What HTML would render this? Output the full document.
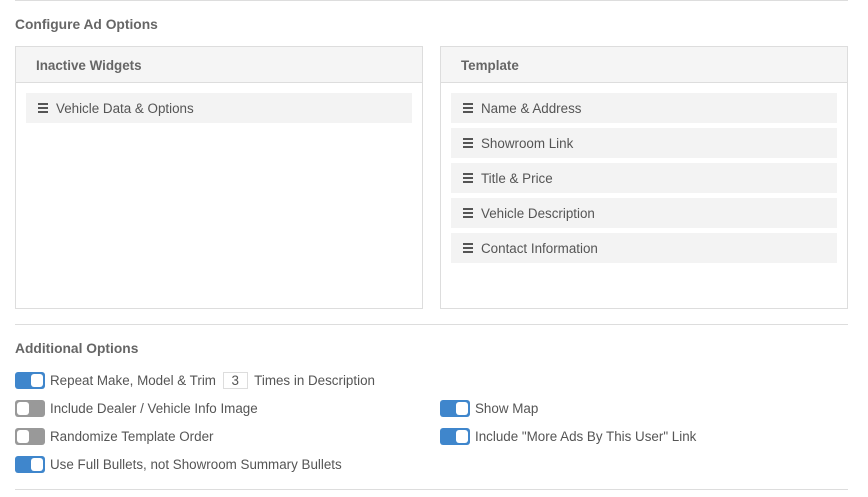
<!DOCTYPE html>
<html><head><style>
*{box-sizing:border-box;margin:0;padding:0}
body{width:868px;height:497px;background:#fff;font-family:"Liberation Sans",sans-serif;color:#555;font-size:13.4px;position:relative;overflow:hidden}
.hr{position:absolute;left:15px;width:833px;height:1px;background:#ddd}
h3{position:absolute;font-size:13.8px;font-weight:bold;color:#666}
.panel{position:absolute;top:46px;width:408px;height:263px;border:1px solid #ddd;background:#fff}
.ph{height:36px;background:#f5f5f5;border-bottom:1px solid #ddd;font-weight:bold;color:#666;font-size:13.4px;line-height:38px;padding-left:20px}
.item{position:absolute;left:10px;width:386px;height:30px;background:#f3f3f3;line-height:31px;padding-left:30px;color:#555}
.item:before{content:"";position:absolute;left:12px;top:10px;width:10px;height:2px;background:#555;box-shadow:0 4px 0 #555,0 8px 0 #555}
.tg{position:absolute;width:30px;height:17px;border-radius:3px;background:#3f86cc}
.tg:after{content:"";position:absolute;top:2px;width:12px;height:13px;background:#fff;border-radius:3px}
.tg.on:after{right:2px}
.tg.off{background:#999}
.tg.off:after{left:2px}
.lbl{position:absolute;line-height:18px}
.num{display:inline-block;width:25px;height:17px;border:1px solid #ddd;text-align:center;margin:0 3px;line-height:15px}
</style></head><body>
<div class="hr" style="top:0"></div>
<h3 style="left:15px;top:17px">Configure Ad Options</h3>
<div class="panel" style="left:15px"><div class="ph">Inactive Widgets</div>
<div class="item" style="top:46px">Vehicle Data &amp; Options</div></div>
<div class="panel" style="left:440px"><div class="ph">Template</div>
<div class="item" style="top:46px">Name &amp; Address</div>
<div class="item" style="top:81px">Showroom Link</div>
<div class="item" style="top:116px">Title &amp; Price</div>
<div class="item" style="top:151px">Vehicle Description</div>
<div class="item" style="top:186px">Contact Information</div></div>
<div class="hr" style="top:324px"></div>
<h3 style="left:15px;top:341px">Additional Options</h3>
<div class="tg on" style="left:15px;top:372px"></div><div class="lbl" style="left:50px;top:372px">Repeat Make, Model &amp; Trim <span class="num">3</span> Times in Description</div>
<div class="tg off" style="left:15px;top:400px"></div><div class="lbl" style="left:50px;top:400px">Include Dealer / Vehicle Info Image</div>
<div class="tg off" style="left:15px;top:428px"></div><div class="lbl" style="left:50px;top:428px">Randomize Template Order</div>
<div class="tg on" style="left:15px;top:456px"></div><div class="lbl" style="left:50px;top:456px">Use Full Bullets, not Showroom Summary Bullets</div>
<div class="tg on" style="left:440px;top:400px"></div><div class="lbl" style="left:475px;top:400px">Show Map</div>
<div class="tg on" style="left:440px;top:428px"></div><div class="lbl" style="left:475px;top:428px">Include "More Ads By This User" Link</div>
<div class="hr" style="top:489px"></div>
</body></html>
